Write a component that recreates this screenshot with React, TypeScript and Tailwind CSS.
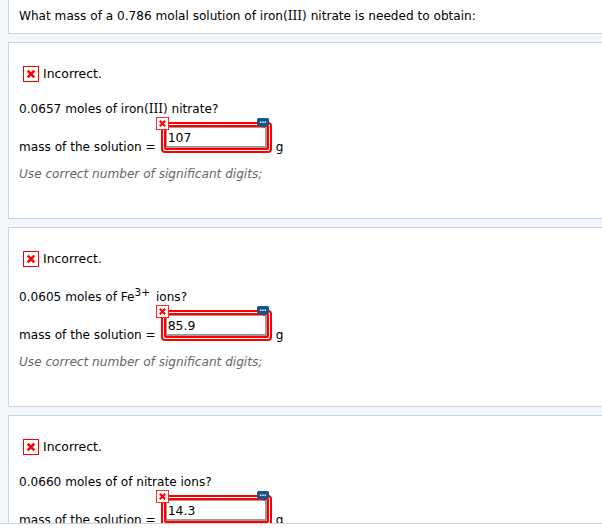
import React from 'react';

const font = 'font-["DejaVu_Sans",Verdana,sans-serif]';

const WrongIcon: React.FC<{ size: number }> = ({ size }) => (
  <svg width={size} height={size} viewBox="0 0 16 16" className="block">
    <rect x="0.5" y="0.5" width="15" height="15" fill="#fff" stroke="#f00" />
    <path d="M4.7 4.7 L11.3 11.3 M11.3 4.7 L4.7 11.3" stroke="#f00" strokeWidth="2.6" />
  </svg>
);

const HintBubble = () => (
  <svg width="12" height="11" viewBox="0 0 12 11" className="block">
    <path d="M1.5 0 H10.5 A1.5 1.5 0 0 1 12 1.5 V6.5 A1.5 1.5 0 0 1 10.5 8 H8.5 L7 10.5 L6 8 H1.5 A1.5 1.5 0 0 1 0 6.5 V1.5 A1.5 1.5 0 0 1 1.5 0 Z" fill="#14568a" />
    <rect x="3" y="3.5" width="1.4" height="1.4" fill="#fff" />
    <rect x="5.3" y="3.5" width="1.4" height="1.4" fill="#fff" />
    <rect x="7.6" y="3.5" width="1.4" height="1.4" fill="#fff" />
  </svg>
);

const AnswerBox: React.FC<{ value: string }> = ({ value }) => (
  <span className="relative inline-block ml-[5px] mr-[4px]">
    <span className="block w-[111px] h-[31px] rounded-[4px] border-[2px] border-[#f00] bg-white p-px">
      <span className="block h-full rounded-[2px] border-[2px] border-[#f00] bg-white">
        <span className="block h-full border-t border-l border-r-2 border-b-2 border-[#9a9a9a] pl-[1px] pt-[2px] leading-[15px] text-[12.4px] text-black">
          {value}
        </span>
      </span>
    </span>
    <span className="absolute left-[-5px] top-[-5px]">
      <WrongIcon size={13} />
    </span>
    <span className="absolute right-[3px] top-[-4px]">
      <HintBubble />
    </span>
  </span>
);

interface Part {
  amount: string;
  question: React.ReactNode;
  value: string;
  note?: boolean;
}

const parts: Part[] = [
  {
    amount: '0.0657',
    question: (
      <>
        iron(<span className='font-["DejaVu_Serif"]'>III</span>) nitrate
      </>
    ),
    value: '107',
    note: true,
  },
  {
    amount: '0.0605',
    question: (
      <>
        Fe<sup className="text-[10.5px] leading-[0] top-[-5px] mr-[2px]">3+</sup> ions
      </>
    ),
    value: '85.9',
    note: true,
  },
  { amount: '0.0660', question: 'of nitrate ions', value: '14.3' },
];

const PartCard: React.FC<{ part: Part; tall: boolean }> = ({ part, tall }) => (
  <div
    className={`${tall ? 'h-[180px]' : 'h-[177px]'} shrink-0 border-y border-l border-[#c8d4e2] bg-white pl-[10px] pt-[23px]`}
  >
    <div className="flex items-center h-[16px] pl-[4px]">
      <WrongIcon size={16} />
      <span className="ml-[4px] text-[12.4px]">Incorrect.</span>
    </div>
    <p className={`${tall ? 'mt-[22px]' : 'mt-[19px]'} leading-[16px]`}>
      {part.amount} moles of {part.question}?
    </p>
    <div className="mt-[5px] flex items-end h-[31px]">
      <span className="leading-[12px]">mass of the solution =</span>
      <AnswerBox value={part.value} />
      <span className="leading-[12px]">g</span>
    </div>
    {part.note && <p className="mt-[13px] leading-[16px] italic text-[#666]">Use correct number of significant digits;</p>}
  </div>
);

export default function App() {
  return (
    <div className={`${font} h-[530px] w-[602px] overflow-hidden bg-white text-[12.1px] text-black`}>
      <div className="h-[523px] overflow-hidden bg-[#f4f7fa] pl-2">
        <div className="flex flex-col gap-[8px]">
          <div className="h-[34px] border-b border-l border-[#c8d4e2] bg-white pl-[10px] pt-[8px] leading-[16px]">
            What mass of a 0.786 molal solution of iron(<span className='font-["DejaVu_Serif"]'>III</span>) nitrate is needed to obtain:
          </div>
          {parts.map((part, i) => (
            <PartCard key={part.amount} part={part} tall={i === 1} />
          ))}
        </div>
      </div>
      <div className="h-[7px] border-t border-[#c8d4e2]" />
    </div>
  );
}
